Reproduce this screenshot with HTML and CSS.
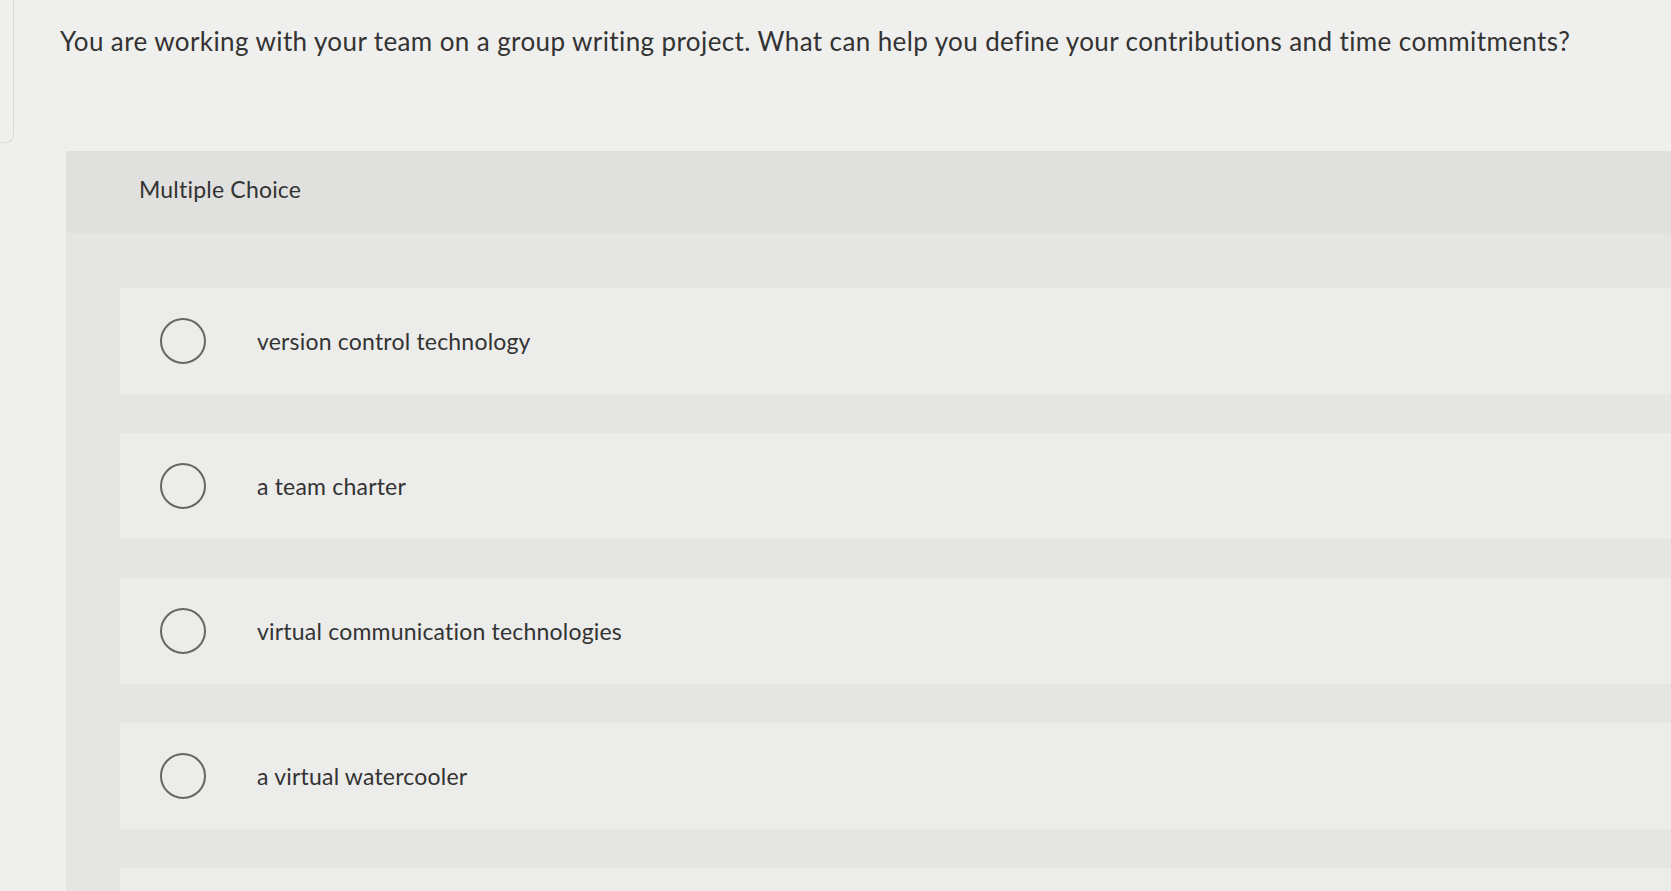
FILE: index.html
```html
<!DOCTYPE html>
<html lang="en">
<head>
<meta charset="utf-8">
<title>Multiple Choice</title>
<link rel="stylesheet" href="styles.css">
</head>
<body>
<div class="page">
  <div class="rail"></div>
  <p class="question">You are working with your team on a group writing project. What can help you define your contributions and time commitments?</p>
  <section class="panel">
    <div class="panel-header">Multiple Choice</div>
    <div class="options">
      <label class="option"><span class="radio"></span><span class="label">version control technology</span></label>
      <label class="option"><span class="radio"></span><span class="label">a team charter</span></label>
      <label class="option"><span class="radio"></span><span class="label">virtual communication technologies</span></label>
      <label class="option"><span class="radio"></span><span class="label">a virtual watercooler</span></label>
      <div class="option option-empty"></div>
    </div>
  </section>
</div>
</body>
</html>
```

FILE: styles.css
```css
html, body {
  margin: 0;
  padding: 0;
}
body {
  background: #efefed;
  font-family: Lato, "Open Sans", sans-serif;
  color: #333333;
  height: 891px;
  overflow: hidden;
}
.page {
  position: relative;
  padding-top: 25px;
}
.rail {
  position: absolute;
  left: 0;
  top: 0;
  width: 13px;
  height: 142px;
  border-right: 1px solid #dcdcda;
  border-bottom: 1px solid #dcdcda;
  border-bottom-right-radius: 8px;
}
.question {
  margin: 0;
  padding-left: 60px;
  font-size: 26px;
  line-height: 32px;
  letter-spacing: 0.4px;
  white-space: nowrap;
}
.panel {
  margin-top: 94px;
  margin-left: 66px;
  background: #e5e5e3;
}
.panel-header {
  height: 82px;
  background: #e0e0de;
  padding-left: 73px;
  display: flex;
  align-items: center;
  font-size: 23px;
  letter-spacing: 0.2px;
  box-sizing: border-box;
  padding-bottom: 6px;
}
.options {
  display: flex;
  flex-direction: column;
  gap: 39px;
  padding-top: 55px;
  padding-left: 54px;
}
.option {
  height: 106px;
  background: #ececea;
  display: flex;
  align-items: center;
  padding-left: 40px;
  font-size: 23px;
  letter-spacing: 0.2px;
}
.radio {
  width: 46px;
  height: 46px;
  border: 2px solid #666664;
  border-radius: 50%;
  flex: none;
  box-sizing: border-box;
}
.label {
  margin-left: 51px;
}
```
